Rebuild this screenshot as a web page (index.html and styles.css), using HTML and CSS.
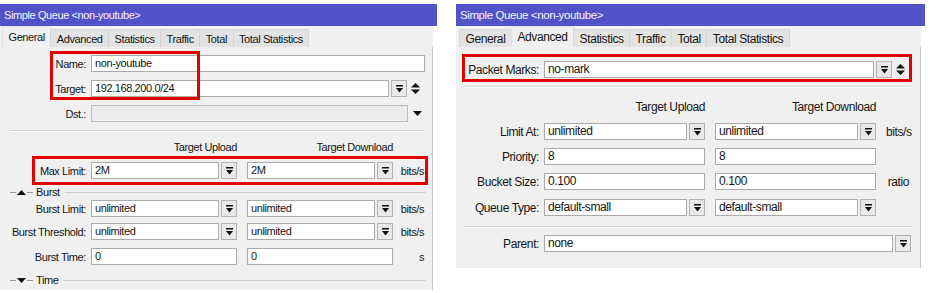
FILE: index.html
```html
<!DOCTYPE html>
<html><head>
<title>Simple Queue &lt;non-youtube&gt;</title>
<link rel="stylesheet" href="styles.css">
<meta charset="UTF-8">
</head>
<body>
<div class="screen">

<!-- General tab -->
<div class="win win-left">
  <div class="title">Simple Queue &lt;non-youtube&gt;</div>
  <div class="tabs">
    <span class="tab active">General</span>
    <span class="tab">Advanced</span>
    <span class="tab">Statistics</span>
    <span class="tab">Traffic</span>
    <span class="tab">Total</span>
    <span class="tab">Total Statistics</span>
  </div>
  <div class="body">
    <div class="row">
      <span class="lbl">Name:</span>
      <span class="field w-name">non-youtube</span>
    </div>
    <div class="row">
      <span class="lbl">Target:</span>
      <span class="field w-target">192.168.200.0/24</span>
      <span class="btn"><svg width="7" height="8" viewBox="0 0 7 8"><rect x="0" y="0" width="7" height="1.5"/><polygon points="0,3 7,3 3.5,7.5"/></svg></span>
      <span class="spin"><svg width="9" height="11" viewBox="0 0 9 11"><polygon points="0,4.5 9,4.5 4.5,0"/><polygon points="0,6.5 9,6.5 4.5,11"/></svg></span>
    </div>
    <div class="row">
      <span class="lbl">Dst.:</span>
      <span class="field off w-dst"></span>
      <span class="drop"><svg width="9" height="5" viewBox="0 0 9 5"><polygon points="0,0 9,0 4.5,5"/></svg></span>
    </div>
    <div class="sep"></div>
    <div class="head">
      <span class="lbl"></span>
      <span class="col">Target Upload</span>
      <span class="col">Target Download</span>
    </div>
    <div class="row">
      <span class="lbl">Max Limit:</span>
      <span class="col"><span class="field">2M</span><span class="btn"><svg width="7" height="8" viewBox="0 0 7 8"><rect x="0" y="0" width="7" height="1.5"/><polygon points="0,3 7,3 3.5,7.5"/></svg></span></span>
      <span class="col"><span class="field">2M</span><span class="btn"><svg width="7" height="8" viewBox="0 0 7 8"><rect x="0" y="0" width="7" height="1.5"/><polygon points="0,3 7,3 3.5,7.5"/></svg></span></span>
      <span class="unit">bits/s</span>
    </div>
    <div class="group g-burst">
      <span class="dash"></span>
      <svg width="9" height="5" viewBox="0 0 9 5"><polygon points="0,5 9,5 4.5,0"/></svg>
      <span class="dash"></span>
      <span class="gname">Burst</span>
      <span class="rule"></span>
    </div>
    <div class="row r-tight">
      <span class="lbl">Burst Limit:</span>
      <span class="col"><span class="field">unlimited</span><span class="btn"><svg width="7" height="8" viewBox="0 0 7 8"><rect x="0" y="0" width="7" height="1.5"/><polygon points="0,3 7,3 3.5,7.5"/></svg></span></span>
      <span class="col"><span class="field">unlimited</span><span class="btn"><svg width="7" height="8" viewBox="0 0 7 8"><rect x="0" y="0" width="7" height="1.5"/><polygon points="0,3 7,3 3.5,7.5"/></svg></span></span>
      <span class="unit">bits/s</span>
    </div>
    <div class="row r-six">
      <span class="lbl">Burst Threshold:</span>
      <span class="col"><span class="field">unlimited</span><span class="btn"><svg width="7" height="8" viewBox="0 0 7 8"><rect x="0" y="0" width="7" height="1.5"/><polygon points="0,3 7,3 3.5,7.5"/></svg></span></span>
      <span class="col"><span class="field">unlimited</span><span class="btn"><svg width="7" height="8" viewBox="0 0 7 8"><rect x="0" y="0" width="7" height="1.5"/><polygon points="0,3 7,3 3.5,7.5"/></svg></span></span>
      <span class="unit">bits/s</span>
    </div>
    <div class="row">
      <span class="lbl">Burst Time:</span>
      <span class="col"><span class="field">0</span></span>
      <span class="col"><span class="field">0</span></span>
      <span class="unit">s</span>
    </div>
    <div class="group">
      <span class="dash"></span>
      <svg width="9" height="5" viewBox="0 0 9 5"><polygon points="0,0 9,0 4.5,5"/></svg>
      <span class="dash"></span>
      <span class="gname">Time</span>
      <span class="rule"></span>
    </div>
  </div>
  <div class="mark mark-a"></div>
  <div class="mark mark-b"></div>
</div>

<!-- Advanced tab -->
<div class="win win-right">
  <div class="title">Simple Queue &lt;non-youtube&gt;</div>
  <div class="tabs">
    <span class="tab">General</span>
    <span class="tab active">Advanced</span>
    <span class="tab">Statistics</span>
    <span class="tab">Traffic</span>
    <span class="tab">Total</span>
    <span class="tab">Total Statistics</span>
  </div>
  <div class="body">
    <div class="row">
      <span class="lbl">Packet Marks:</span>
      <span class="field w-marks">no-mark</span>
      <span class="btn"><svg width="7" height="8" viewBox="0 0 7 8"><rect x="0" y="0" width="7" height="1.5"/><polygon points="0,3 7,3 3.5,7.5"/></svg></span>
      <span class="spin"><svg width="9" height="11" viewBox="0 0 9 11"><polygon points="0,4.5 9,4.5 4.5,0"/><polygon points="0,6.5 9,6.5 4.5,11"/></svg></span>
    </div>
    <div class="sep"></div>
    <div class="head h-wide">
      <span class="lbl"></span>
      <span class="col">Target Upload</span>
      <span class="col">Target Download</span>
    </div>
    <div class="row r-nine">
      <span class="lbl">Limit At:</span>
      <span class="col"><span class="field">unlimited</span><span class="btn"><svg width="7" height="8" viewBox="0 0 7 8"><rect x="0" y="0" width="7" height="1.5"/><polygon points="0,3 7,3 3.5,7.5"/></svg></span></span>
      <span class="col"><span class="field">unlimited</span><span class="btn"><svg width="7" height="8" viewBox="0 0 7 8"><rect x="0" y="0" width="7" height="1.5"/><polygon points="0,3 7,3 3.5,7.5"/></svg></span></span>
      <span class="unit">bits/s</span>
    </div>
    <div class="row">
      <span class="lbl">Priority:</span>
      <span class="col"><span class="field">8</span></span>
      <span class="col"><span class="field">8</span></span>
    </div>
    <div class="row">
      <span class="lbl">Bucket Size:</span>
      <span class="col"><span class="field">0.100</span></span>
      <span class="col"><span class="field">0.100</span></span>
      <span class="unit">ratio</span>
    </div>
    <div class="row r-nine">
      <span class="lbl">Queue Type:</span>
      <span class="col"><span class="field">default-small</span><span class="btn"><svg width="7" height="8" viewBox="0 0 7 8"><rect x="0" y="0" width="7" height="1.5"/><polygon points="0,3 7,3 3.5,7.5"/></svg></span></span>
      <span class="col"><span class="field">default-small</span><span class="btn"><svg width="7" height="8" viewBox="0 0 7 8"><rect x="0" y="0" width="7" height="1.5"/><polygon points="0,3 7,3 3.5,7.5"/></svg></span></span>
    </div>
    <div class="sep s-low"></div>
    <div class="row r-seven">
      <span class="lbl">Parent:</span>
      <span class="field w-parent">none</span>
      <span class="btn"><svg width="7" height="8" viewBox="0 0 7 8"><rect x="0" y="0" width="7" height="1.5"/><polygon points="0,3 7,3 3.5,7.5"/></svg></span>
    </div>
  </div>
  <div class="mark mark-c"></div>
</div>

</div>
</body></html>
```

FILE: styles.css
```css
body {
    margin: 0;
    background: #fff;
    font-family: "Liberation Sans", Arial, sans-serif;
    font-size: 11px;
    letter-spacing: -0.4px;
    color: #151515;
}

.screen { display: flex; align-items: flex-start; gap: 19px; padding-top: 4px; }

.win { position: relative; }
.win-left  { width: 437px; }
.win-right { width: 469px; font-size: 12px; }

.title {
  height: 22px;
  line-height: 22px;
  background: #5252c8;
  color: #f2f2ff;
  padding-left: 4px;
  white-space: nowrap;
}
.win-right .title { font-size: 11.5px; }

.tabs {
  display: flex;
  align-items: flex-end;
  height: 21px;
  padding-left: 3px;
  margin-right: 4px;
  background: #f0f0f0;
}
.win-right .tabs { padding-left: 4px; }

.tab {
  height: 18px;
  line-height: 19px;
  padding: 0 5.5px;
  background: #e3e3e3;
  border: 1px solid #d4d4d4;
  border-bottom: 0;
  margin-left: -1px;
  white-space: nowrap;
  box-sizing: border-box;
}
.tab.active {
  height: 21px;
  line-height: 20px;
  background: #f0f0f0;
  border-color: #e2e2e2;
}

.body {
  background: #f0f0f0;
  border-right: 1px solid #c4c4c4;
  margin-right: 4px;
  padding: 8px 0 3px;
}
.win-right .body { padding: 14px 0 16px; }

/* form rows */
.row { display: flex; align-items: center; height: 17px; margin-top: 8px; }
.body > .row:first-child { margin-top: 0; }
.r-tight { margin-top: 1px; }
.r-six   { margin-top: 6px; }
.r-nine  { margin-top: 9px; }
.r-seven { margin-top: 7px; }

.lbl { flex: none; width: 86px; margin-right: 5px; text-align: right; white-space: nowrap; }
.win-right .lbl { width: 83px; }

.field {
  flex: 1;
  height: 17px;
  line-height: 15px;
  box-sizing: border-box;
  border: 1px solid #aaaaaa;
  background: #fff;
  padding: 0 3px;
  white-space: nowrap;
  overflow: hidden;
}
.field.off { background: #ececec; border-color: #bdbdbd; }

.w-name   { flex: none; width: 334px; }
.w-target { flex: none; width: 298px; }
.w-dst    { flex: none; width: 317px; }
.w-marks  { flex: none; width: 330px; }
.w-parent { flex: none; width: 349px; }

.btn {
  flex: none;
  width: 16px;
  height: 17px;
  box-sizing: border-box;
  margin-left: 2px;
  border: 1px solid #b3b3b3;
  background: #e9e9e9;
  display: flex;
  align-items: center;
  justify-content: center;
}
.btn svg, .spin svg, .drop svg, .group svg { fill: #111; display: block; }

.spin { flex: none; margin-left: 4px; display: flex; }
.drop { flex: none; margin-left: 5px; display: flex; }

.col { flex: none; width: 146px; display: flex; margin-right: 10px; }
.col:last-of-type { margin-right: 0; }
.win-right .col { width: 161px; }

.unit { flex: 1; text-align: right; padding-right: 11px; white-space: nowrap; }
.win-left .unit { padding-right: 8px; margin-left: -4px; }

.head { display: flex; height: 14px; line-height: 14px; margin-top: 8px; }
.head .col { justify-content: flex-end; }
.h-wide { margin-top: 12px; }

/* etched separator */
.sep {
  height: 0;
  border-top: 1px solid #d6d6d6;
  border-bottom: 1px solid #fff;
  margin: 8px 7px 0 10px;
}
.win-right .sep { margin: 8px 7px 0 9px; }
.win-right .s-low { margin-top: 10px; }

/* collapsible group header */
.group { display: flex; align-items: center; height: 14px; margin-top: 8px; padding-left: 10px; margin-right: 6px; }
.g-burst { margin-top: 6px; }
.dash { width: 6px; border-top: 1px solid #9a9a9a; margin-right: 1px; }
.group svg + .dash { margin-left: 1px; margin-right: 3px; }
.gname { padding-right: 5px; }
.rule { flex: 1; border-top: 1px solid #d0d0d0; }

/* red highlight boxes */
.mark { position: absolute; border: 3px solid #e10000; box-sizing: border-box; }
.mark-a { left: 50px; top: 47px; width: 150px; height: 49px; }
.mark-b { left: 32px; top: 152px; width: 396px; height: 29px; }
.mark-c { left: 6px; top: 50px; width: 450px; height: 28px; }
```
